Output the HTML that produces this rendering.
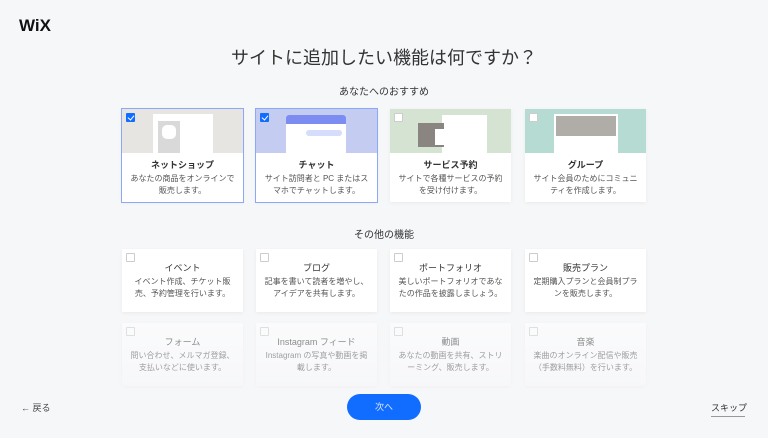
<!DOCTYPE html>
<html><head><meta charset="utf-8"><style>
*{margin:0;padding:0;box-sizing:border-box}
body{width:768px;height:438px;background:#f6f7f9;font-family:"Liberation Sans","Noto Sans CJK JP",sans-serif;position:relative;overflow:hidden;color:#333}
.abs{position:absolute}
.logo{left:19px;top:16px;font-size:17px;font-weight:bold;color:#111;font-family:"Liberation Sans",sans-serif}
h1{position:absolute;top:44px;left:0;width:768px;text-align:center;font-size:18px;font-weight:normal;color:#333}
.sub{position:absolute;left:0;width:768px;text-align:center;font-size:10px;color:#333}
.card{position:absolute;width:121px;background:#fff;box-shadow:0 1px 4px rgba(0,0,0,.06);text-align:center}
.card.sel{outline:1px solid #8ea8f5}
.img{height:44px;position:relative;overflow:hidden}
.cb{position:absolute;left:4px;top:4px;width:9px;height:9px;border:1px solid #ccc;background:#fff;border-radius:1px}
.cb.on{background:#116dff;border-color:#116dff}
.cb.on:after{content:"";position:absolute;left:2px;top:0px;width:3px;height:5px;border:solid #fff;border-width:0 1.2px 1.2px 0;transform:rotate(40deg)}
.t{font-size:9px;font-weight:bold;color:#333;margin-top:5px}
.d{font-size:8px;color:#555;line-height:12px;margin-top:2px;padding:0 8px}
.card2{height:63px}
.card2 .t{margin-top:12px;font-weight:normal;color:#333}
.fade{opacity:.55;background:linear-gradient(#fff,#f8f8fa)}
</style></head><body>
<div class="abs logo">WiX</div>
<h1>サイトに追加したい機能は何ですか？</h1>
<div class="sub" style="top:83px">あなたへのおすすめ</div>

<div class="card sel" style="left:122px;top:109px;height:93px">
 <div class="img" style="background:#e6e5e2"><div class="abs" style="left:31px;top:5px;width:60px;height:40px;background:#fff"></div><div class="abs" style="left:36px;top:12px;width:22px;height:32px;background:#d9d9d9"></div><div class="abs" style="left:40px;top:16px;width:14px;height:14px;background:#fff;border-radius:5px"></div><div class="cb on"></div></div>
 <div class="t">ネットショップ</div><div class="d">あなたの商品をオンラインで販売します。</div></div>
<div class="card sel" style="left:256px;top:109px;height:93px">
 <div class="img" style="background:#c5ccf2"><div class="abs" style="left:30px;top:6px;width:60px;height:40px;background:#fff;border-radius:3px"></div><div class="abs" style="left:30px;top:6px;width:60px;height:9px;background:#7c8cf0;border-radius:3px 3px 0 0"></div><div class="abs" style="left:50px;top:21px;width:36px;height:6px;background:#d6dcfb;border-radius:3px"></div><div class="cb on"></div></div>
 <div class="t">チャット</div><div class="d">サイト訪問者と PC またはスマホでチャットします。</div></div>
<div class="card" style="left:390px;top:109px;height:93px">
 <div class="img" style="background:#d4e3d2"><div class="abs" style="left:52px;top:6px;width:45px;height:40px;background:#fff"></div><div class="abs" style="left:28px;top:14px;width:26px;height:24px;background:#8a8580"></div><div class="abs" style="left:45px;top:20px;width:24px;height:16px;background:#fff"></div><div class="cb"></div></div>
 <div class="t">サービス予約</div><div class="d">サイトで各種サービスの予約を受け付けます。</div></div>
<div class="card" style="left:525px;top:109px;height:93px">
 <div class="img" style="background:#b5dbd2"><div class="abs" style="left:29px;top:5px;width:64px;height:40px;background:#fff"></div><div class="abs" style="left:31px;top:7px;width:60px;height:20px;background:#b0aca8"></div><div class="cb"></div></div>
 <div class="t">グループ</div><div class="d">サイト会員のためにコミュニティを作成します。</div></div>

<div class="sub" style="top:226px">その他の機能</div>

<div class="card card2" style="left:122px;top:249px"><div class="cb"></div><div class="t">イベント</div><div class="d">イベント作成、チケット販売、予約管理を行います。</div></div>
<div class="card card2" style="left:256px;top:249px"><div class="cb"></div><div class="t">ブログ</div><div class="d">記事を書いて読者を増やし、アイデアを共有します。</div></div>
<div class="card card2" style="left:390px;top:249px"><div class="cb"></div><div class="t">ポートフォリオ</div><div class="d">美しいポートフォリオであなたの作品を披露しましょう。</div></div>
<div class="card card2" style="left:525px;top:249px"><div class="cb"></div><div class="t">販売プラン</div><div class="d">定期購入プランと会員制プランを販売します。</div></div>

<div class="card card2 fade" style="left:122px;top:323px"><div class="cb"></div><div class="t">フォーム</div><div class="d">問い合わせ、メルマガ登録、支払いなどに使います。</div></div>
<div class="card card2 fade" style="left:256px;top:323px"><div class="cb"></div><div class="t">Instagram フィード</div><div class="d">Instagram の写真や動画を掲載します。</div></div>
<div class="card card2 fade" style="left:390px;top:323px"><div class="cb"></div><div class="t">動画</div><div class="d">あなたの動画を共有、ストリーミング、販売します。</div></div>
<div class="card card2 fade" style="left:525px;top:323px"><div class="cb"></div><div class="t">音楽</div><div class="d">楽曲のオンライン配信や販売（手数料無料）を行います。</div></div>

<div class="abs" style="left:21px;top:401px;font-size:9px;color:#444">← 戻る</div>
<div class="abs" style="left:347px;top:394px;width:74px;height:26px;border-radius:13px;background:#116dff;color:#dde8ff;font-size:9px;text-align:center;line-height:26px">次へ</div>
<div class="abs" style="left:711px;top:401px;font-size:9px;color:#333">スキップ</div>
<div class="abs" style="left:711px;top:416px;width:34px;height:1px;background:#999"></div>
</body></html>
